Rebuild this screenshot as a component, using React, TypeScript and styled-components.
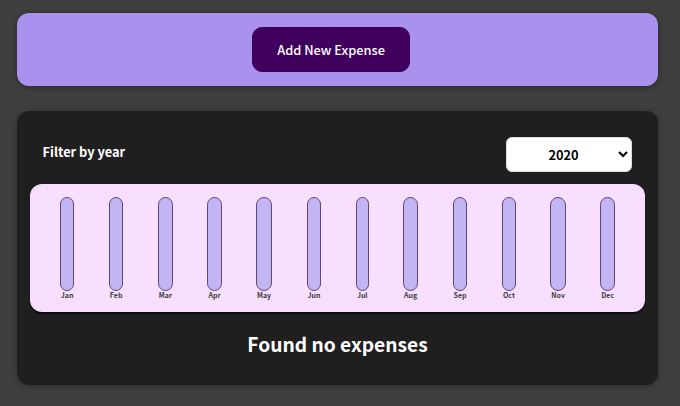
import React from "react";
import styled, { createGlobalStyle } from "styled-components";

const GlobalStyle = createGlobalStyle`
  html, body {
    margin: 0;
    padding: 0;
    background: #3f3f3f;
    font-family: "Noto Sans CJK JP", "Noto Sans", sans-serif;
    font-size: 12.8px;
  }
  * { box-sizing: border-box; }
`;

const Page = styled.div`
  padding: 13px 22px 20px 17px;
`;

const NewExpenseCard = styled.div`
  background: #a892ee;
  padding: 14px 0;
  border-radius: 12px;
  text-align: center;
  box-shadow: 0 1px 6px rgba(0, 0, 0, 0.35);
`;

const AddButton = styled.button`
  font-family: inherit;
  font-size: 12.8px;
  font-weight: 500;
  line-height: 19px;
  cursor: pointer;
  padding: 12px 24px;
  margin-right: 12.8px;
  border: 1px solid #40005d;
  background: #40005d;
  color: #fff;
  border-radius: 10px;
`;

const ExpensesCard = styled.div`
  margin-top: 25px;
  background: #1f1f1f;
  padding: 12.8px;
  border-radius: 12px;
  box-shadow: 0 1px 6px rgba(0, 0, 0, 0.3);
`;

const FilterRow = styled.div`
  display: flex;
  align-items: center;
  justify-content: space-between;
  padding: 0 12.8px;
  margin: 12.8px 0;
  color: #fff;
`;

const FilterLabel = styled.label`
  font-weight: bold;
  font-size: 12.8px;
  margin-bottom: 6px;
`;

const YearSelect = styled.select`
  font-family: inherit;
  font-size: 12.8px;
  font-weight: bold;
  width: 126px;
  height: 35px;
  padding: 0 0 0 37px;
  border-radius: 6px;
  border: 1px solid #ddd;
  background: #fff;
  color: #000;
  text-align: left;
`;

const Chart = styled.div`
  height: 128px;
  padding: 12.8px;
  border-radius: 12px;
  background: #f8dfff;
  display: flex;
  justify-content: space-around;
  text-align: center;
  box-shadow: 0 2px 1px rgba(0, 0, 0, 0.7);
`;

const BarColumn = styled.div`
  height: 100%;
  display: flex;
  flex-direction: column;
  align-items: center;
`;

const BarInner = styled.div`
  flex: 1;
  width: 100%;
  border: 1px solid #5b4a78;
  border-radius: 12px;
  background: #c3b4f3;
`;

const BarLabel = styled.div`
  font-weight: bold;
  font-size: 7px;
  line-height: 9px;
  color: #3a3a3a;
  padding: 0 1px;
`;

const Fallback = styled.h2`
  margin: 17px 0 13px;
  color: #fff;
  text-align: center;
  font-size: 19.2px;
  font-weight: bold;
  line-height: 30px;
`;

const months = ["Jan", "Feb", "Mar", "Apr", "May", "Jun", "Jul", "Aug", "Sep", "Oct", "Nov", "Dec"];

export default function App() {
  return (
    <>
      <GlobalStyle />
      <Page>
        <NewExpenseCard>
          <AddButton>Add New Expense</AddButton>
        </NewExpenseCard>
        <ExpensesCard>
          <FilterRow>
            <FilterLabel>Filter by year</FilterLabel>
            <YearSelect defaultValue="2020">
              <option value="2022">2022</option>
              <option value="2021">2021</option>
              <option value="2020">2020</option>
              <option value="2019">2019</option>
            </YearSelect>
          </FilterRow>
          <Chart>
            {months.map((m) => (
              <BarColumn key={m}>
                <BarInner />
                <BarLabel>{m}</BarLabel>
              </BarColumn>
            ))}
          </Chart>
          <Fallback>Found no expenses</Fallback>
        </ExpensesCard>
      </Page>
    </>
  );
}
